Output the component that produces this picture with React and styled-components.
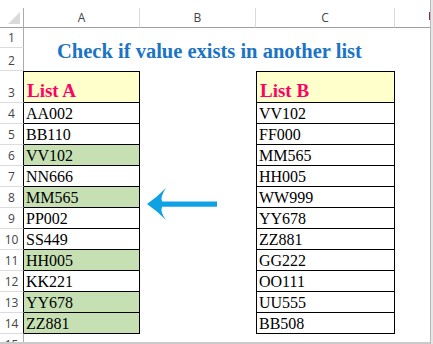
import React from "react";
import styled, { createGlobalStyle } from "styled-components";

const GlobalStyle = createGlobalStyle`
  *, *::before, *::after { box-sizing: border-box; }
  html, body { margin: 0; padding: 0; background: #fff; }
`;

const listA = [
  ["AA002", false],
  ["BB110", false],
  ["VV102", true],
  ["NN666", false],
  ["MM565", true],
  ["PP002", false],
  ["SS449", false],
  ["HH005", true],
  ["KK221", false],
  ["YY678", true],
  ["ZZ881", true],
];

const listB = [
  "VV102",
  "FF000",
  "MM565",
  "HH005",
  "WW999",
  "YY678",
  "ZZ881",
  "GG222",
  "OO111",
  "UU555",
  "BB508",
];

const Frame = styled.div`
  display: grid;
  grid-template-columns: 430px 3px;
  grid-template-rows: 342px 2px;
  width: 433px;
  height: 344px;
  overflow: hidden;
  background: #fff;
`;

const Sheet = styled.div`
  display: grid;
  grid-template-columns: 24px 116px 116px 139px 35px;
  grid-template-rows: 8px 20px 20px 23px 32px repeat(12, 21px);
  height: 342px;
  overflow: hidden;
  font-family: "Liberation Serif", "Times New Roman", serif;
`;

const RightEdge = styled.div`
  grid-column: 2;
  grid-row: 1 / 3;
  background: #e6e6e6;
  border-left: 1px solid #b9b9b9;
`;

const BottomEdge = styled.div`
  grid-column: 1;
  grid-row: 2;
  background: #c9c9c9;
`;

const Corner = styled.div`
  grid-row: 2;
  grid-column: 1;
  display: flex;
  justify-content: flex-end;
  align-items: flex-end;
  padding: 0 3px 3px 0;
  border-right: 1px solid #ababab;
  border-bottom: 1px solid #9e9e9e;
`;

const Triangle = styled.div`
  width: 12px;
  height: 12px;
  background: #dadada;
  clip-path: polygon(100% 0, 100% 100%, 0 100%);
`;

const ColHead = styled.div`
  grid-row: 2;
  grid-column: ${(p) => p.$col};
  display: flex;
  align-items: center;
  justify-content: ${(p) => (p.$edge ? "flex-end" : "center")};
  border-right: ${(p) => (p.$edge ? "none" : "1px solid #dadada")};
  border-bottom: 1px solid #9e9e9e;
  font-family: "Open Sans", "Liberation Sans", sans-serif;
  font-size: 12px;
  color: #444;
`;

const RedMark = styled.span`
  width: 1px;
  height: 8px;
  margin-bottom: 3px;
  background: #a3283f;
`;

const RowNum = styled.div`
  grid-column: 1;
  grid-row: ${(p) => p.$row};
  display: flex;
  align-items: flex-end;
  justify-content: center;
  padding-bottom: 2px;
  border-right: 1px solid ${(p) => (p.$boxed ? "#000" : "#ababab")};
  border-bottom: 1px solid #dcdcdc;
  font-family: "Open Sans", "Liberation Sans", sans-serif;
  font-size: 12px;
  line-height: 14px;
  color: #444;
`;

const Title = styled.div`
  grid-column: 2 / 5;
  grid-row: 3 / 5;
  display: flex;
  align-items: flex-end;
  justify-content: center;
  padding-bottom: 8px;
  font-size: 20.5px;
  font-weight: bold;
  line-height: 24px;
  color: #1b74c5;
  white-space: nowrap;
`;

const Cell = styled.div`
  grid-column: ${(p) => p.$col};
  grid-row: ${(p) => p.$row};
  display: flex;
  align-items: flex-end;
  padding-left: ${(p) => (p.$head ? "3px" : "2px")};
  border-right: 1px solid #000;
  border-bottom: 1px solid #000;
  border-top: ${(p) => (p.$head ? "1px solid #000" : "none")};
  border-left: ${(p) => (p.$left ? "1px solid #000" : "none")};
  background: ${(p) =>
    p.$head ? "#ffffcc" : p.$match ? "#c6e0b4" : "transparent"};
  color: ${(p) => (p.$head ? "#ff0066" : "#000")};
  font-size: ${(p) => (p.$head ? "19px" : "16px")};
  font-weight: ${(p) => (p.$head ? "bold" : "normal")};
  line-height: ${(p) => (p.$head ? "22px" : "18px")};
  white-space: nowrap;
`;

const ArrowSlot = styled.div`
  grid-column: 3;
  grid-row: 10 / 12;
  align-self: start;
  justify-self: start;
  margin-left: 6px;
  display: flex;
`;

function Arrow() {
  return (
    <svg width="72" height="35" viewBox="0 0 72 35">
      <path
        d="M1 17 Q11 10 20 1 Q14 10 16 14.5 L71 14.5 L71 19.8 L16 19.8 Q14 25 20 33 Q11 24 1 17 Z"
        fill="#0ea1e3"
      />
    </svg>
  );
}

export default function App() {
  const rows = Array.from({ length: 15 }, (_, i) => i + 1);

  return (
    <>
      <GlobalStyle />
      <Frame>
        <Sheet>
          <Corner>
            <Triangle />
          </Corner>
          <ColHead $col={2}>A</ColHead>
          <ColHead $col={3}>B</ColHead>
          <ColHead $col={4}>C</ColHead>
          <ColHead $col={5} $edge>
            <RedMark />
          </ColHead>

          {rows.map((r) => (
            <RowNum key={r} $row={r + 2} $boxed={r >= 3 && r <= 14}>
              {r}
            </RowNum>
          ))}

          <Title>Check if value exists in another list</Title>

          <Cell $col={2} $row={5} $head>
            List A
          </Cell>
          <Cell $col={4} $row={5} $head $left>
            List B
          </Cell>

          {listA.map(([v, match], i) => (
            <Cell key={"a" + v} $col={2} $row={i + 6} $match={match}>
              {v}
            </Cell>
          ))}
          {listB.map((v, i) => (
            <Cell key={"b" + v} $col={4} $row={i + 6} $left>
              {v}
            </Cell>
          ))}

          <ArrowSlot>
            <Arrow />
          </ArrowSlot>
        </Sheet>
        <RightEdge />
        <BottomEdge />
      </Frame>
    </>
  );
}
